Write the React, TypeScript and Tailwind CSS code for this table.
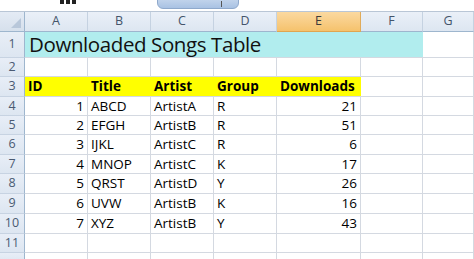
import React from "react";

const cols = [
  { l: "A", w: 63 },
  { l: "B", w: 63 },
  { l: "C", w: 63 },
  { l: "D", w: 63 },
  { l: "E", w: 84 },
  { l: "F", w: 62 },
  { l: "G", w: 51 },
];

const data = [
  [1, "ABCD", "ArtistA", "R", 21],
  [2, "EFGH", "ArtistB", "R", 51],
  [3, "IJKL", "ArtistC", "R", 6],
  [4, "MNOP", "ArtistC", "K", 17],
  [5, "QRST", "ArtistD", "Y", 26],
  [6, "UVW", "ArtistB", "K", 16],
  [7, "XYZ", "ArtistB", "Y", 43],
];

const font = { fontFamily: "'Open Sans', 'Liberation Sans', sans-serif" };

function RowHead({ n, h }: { n: number; h: number }) {
  return (
    <div
      className="w-[25px] shrink-0 flex items-center justify-center bg-gradient-to-b from-[#e8eef7] to-[#dde6f1] border-r border-r-[#9eb6ce] border-b border-b-[#c7d3e2] text-[12.5px] text-[#4a5a72]"
      style={{ height: h }}
    >
      {n}
    </div>
  );
}

function Cell({
  w,
  h,
  children,
  className = "",
}: {
  w: number;
  h: number;
  children?: React.ReactNode;
  className?: string;
}) {
  return (
    <div
      className={"shrink-0 flex items-center border-r border-r-[#d4d9e1] border-b border-b-[#d4d9e1] px-[3px] overflow-visible whitespace-nowrap " + className}
      style={{ width: w, height: h }}
    >
      {children}
    </div>
  );
}

const heights = [19, 19, 20, 19, 20, 20, 20];

export default function App() {
  return (
    <div className="w-[474px] h-[259px] overflow-hidden bg-white text-[13.5px] text-black" style={font}>
      {/* top strip */}
      <div className="h-[12px] relative bg-white border-b border-b-[#b9c6d6]">
        <div className="absolute left-[60px] top-0 flex gap-[2px]">
          <div className="w-[4px] h-[4px] bg-[#222]" />
          <div className="w-[4px] h-[4px] bg-[#222]" />
          <div className="w-[4px] h-[4px] bg-[#222]" />
        </div>
        <div className="absolute left-[157px] top-[-4px] w-[82px] h-[13px] rounded-b-[6px] bg-gradient-to-b from-[#c9d9ee] to-[#a9c2e3] border border-[#8fa9cc]">
          <div className="absolute left-[63px] top-[4px] w-[1px] h-[6px] bg-[#555]" />
        </div>
      </div>
      {/* column header */}
      <div className="flex h-[20px]">
        <div className="w-[25px] shrink-0 relative bg-gradient-to-b from-[#e4ebf5] to-[#d6e0ec] border-r border-r-[#9eb6ce] border-b border-b-[#9eb6ce]">
          <div className="absolute right-[3px] bottom-[3px] w-0 h-0 border-l-[10px] border-l-transparent border-b-[10px] border-b-[#b8c7da]" />
        </div>
        {cols.map((c) => (
          <div
            key={c.l}
            className={
              "shrink-0 flex items-center justify-center border-r border-b text-[12.5px] " +
              (c.l === "E"
                ? "bg-gradient-to-b from-[#fbd9a0] to-[#f5c26c] border-r-[#e0ab5a] border-b-[#e0a550] text-[#3b3b3b]"
                : "bg-gradient-to-b from-[#eaf0f8] to-[#dde6f1] border-r-[#c5d2e1] border-b-[#9eb6ce] text-[#44546a]")
            }
            style={{ width: c.w }}
          >
            {c.l}
          </div>
        ))}
      </div>
      {/* row 1 */}
      <div className="flex">
        <RowHead n={1} h={26} />
        <div className="w-[398px] h-[26px] shrink-0 bg-[#b1edee] flex items-center pl-[4px] border-b border-b-[#d4d9e1]">
          <span className="text-[20.5px] leading-none tracking-[-0.4px] text-[#111]">Downloaded Songs Table</span>
        </div>
        <Cell w={51} h={26} />
      </div>
      {/* row 2 */}
      <div className="flex">
        <RowHead n={2} h={19} />
        {cols.map((c) => (
          <Cell key={c.l} w={c.w} h={19} />
        ))}
      </div>
      {/* row 3 */}
      <div className="flex">
        <RowHead n={3} h={20} />
        {["ID", "Title", "Artist", "Group", "Downloads"].map((t, i) => (
          <div
            key={t}
            className="shrink-0 h-[20px] bg-[#ffff00] flex items-center px-[3px] font-bold border-b border-b-[#d4d9e1]"
            style={{ width: cols[i].w }}
          >
            {t}
          </div>
        ))}
        <Cell w={62} h={20} />
        <Cell w={51} h={20} />
      </div>
      {data.map((r, i) => (
        <div className="flex" key={i}>
          <RowHead n={i + 4} h={heights[i]} />
          <Cell w={63} h={heights[i]} className="justify-end">{r[0]}</Cell>
          <Cell w={63} h={heights[i]}>{r[1]}</Cell>
          <Cell w={63} h={heights[i]}>{r[2]}</Cell>
          <Cell w={63} h={heights[i]}>{r[3]}</Cell>
          <Cell w={84} h={heights[i]} className="justify-end">{r[4]}</Cell>
          <Cell w={62} h={heights[i]} />
          <Cell w={51} h={heights[i]} />
        </div>
      ))}
      <div className="flex">
        <RowHead n={11} h={19} />
        {cols.map((c) => (
          <Cell key={c.l} w={c.w} h={19} />
        ))}
      </div>
      <div className="flex">
        <div className="w-[25px] h-[10px] shrink-0 bg-gradient-to-b from-[#e8eef7] to-[#dde6f1] border-r border-r-[#9eb6ce]" />
        {cols.map((c) => (
          <div key={c.l} className="shrink-0 h-[10px] border-r border-r-[#d4d9e1]" style={{ width: c.w }} />
        ))}
      </div>
    </div>
  );
}
